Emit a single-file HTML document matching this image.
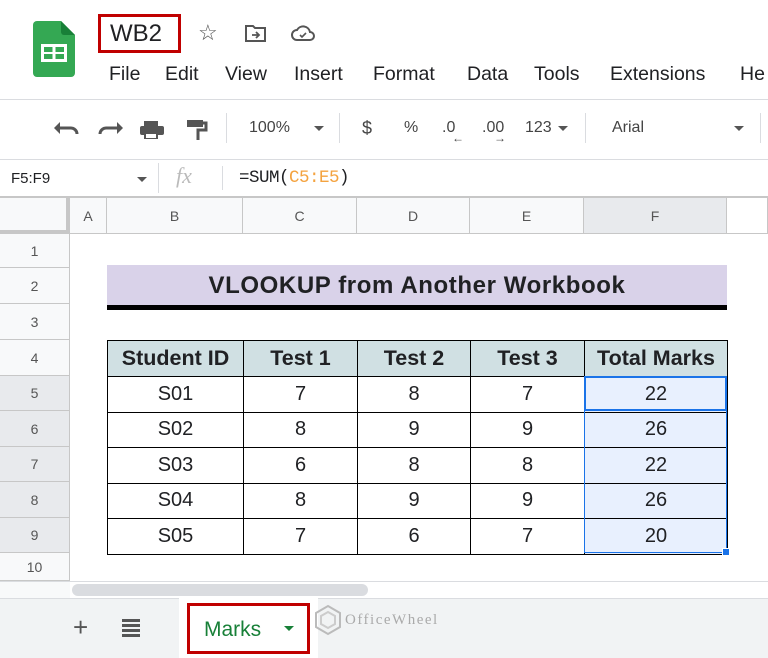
<!DOCTYPE html>
<html><head><style>
*{margin:0;padding:0;box-sizing:border-box}
body{width:768px;height:658px;position:relative;overflow:hidden;background:#fff;font-family:"Liberation Sans",Arial,sans-serif;color:#202124}
.a{position:absolute}
.menu span{position:absolute;top:63px;font-size:19.5px;color:#202124}
.tb{position:absolute;font-size:16px;color:#444;top:119px}
.ch{position:absolute;top:198px;height:36px;border-right:1px solid #c7c7c7;border-bottom:1px solid #c7c7c7;background:#f8f9fa;text-align:center;line-height:36px;font-size:14px;color:#555}
.rh{position:absolute;left:0;width:70px;border-right:1px solid #c7c7c7;border-bottom:1px solid #c7c7c7;background:#f8f9fa;text-align:center;font-size:14px;color:#555}
table{position:absolute;left:107px;top:340px;border-collapse:collapse}
td{border:1.5px solid #000;text-align:center;font-size:20px;padding:0;height:35.5px}
th{border:1.5px solid #000;background:#d0e0e3;font-size:21.5px;font-weight:bold;height:36px;padding:0}
td.f{background:#e8f0fe;border-color:#000}
</style></head><body>
<svg class="a" style="left:33px;top:21px" width="42" height="57" viewBox="0 0 42 57"><path d="M4 0H28L42 14V52a4 4 0 0 1-4 4H4a4 4 0 0 1-4-4V4a4 4 0 0 1 4-4z" fill="#34a853"/><path d="M28 0L42 14H31a3 3 0 0 1-3-3z" fill="#188038"/><rect x="8" y="23" width="26" height="18" fill="#fff"/><rect x="11" y="26" width="8.5" height="5" fill="#34a853"/><rect x="22.5" y="26" width="8.5" height="5" fill="#34a853"/><rect x="11" y="33" width="8.5" height="5" fill="#34a853"/><rect x="22.5" y="33" width="8.5" height="5" fill="#34a853"/></svg>
<div class="a" style="left:98px;top:14px;width:83px;height:39px;border:3px solid #c00000;font-size:24px;line-height:33px;padding-left:9px">WB2</div>
<div class="a" style="left:198px;top:20px;font-size:22px;color:#555">☆</div>
<svg class="a" style="left:244px;top:24px" width="24" height="20" viewBox="0 0 24 20"><path d="M2 2h7l2 2h10v13H2z" fill="none" stroke="#555" stroke-width="2"/><path d="M8 11h7M12 8l3 3-3 3" fill="none" stroke="#555" stroke-width="1.8"/></svg>
<svg class="a" style="left:290px;top:24px" width="26" height="18" viewBox="0 0 26 18"><path d="M7 16a5 5 0 0 1 0-10 7 7 0 0 1 13 2 4 4 0 0 1 0 8z" fill="none" stroke="#555" stroke-width="2"/><path d="M10 11l2 2 4-4" fill="none" stroke="#555" stroke-width="1.6"/></svg>
<div class="menu"><span style="left:109px">File</span><span style="left:165px">Edit</span><span style="left:225px">View</span><span style="left:294px">Insert</span><span style="left:373px">Format</span><span style="left:467px">Data</span><span style="left:534px">Tools</span><span style="left:610px">Extensions</span><span style="left:740px">He</span></div>
<div class="a" style="left:0;top:99px;width:768px;height:1px;background:#dadce0"></div>
<svg class="a" style="left:53px;top:119px" width="160" height="22" viewBox="0 0 160 22"><path d="M4 9h14a6 6 0 0 1 6 6" fill="none" stroke="#555" stroke-width="3"/><path d="M1 9l6-6v12z" fill="#555"/><path d="M67 9H53a6 6 0 0 0-6 6" fill="none" stroke="#555" stroke-width="3"/><path d="M70 9l-6-6v12z" fill="#555"/><rect x="91" y="2" width="14" height="5" fill="#555"/><rect x="87" y="7" width="24" height="9" rx="2" fill="#555"/><rect x="91" y="13" width="14" height="7" fill="#555"/><rect x="93" y="15" width="10" height="4" fill="#fff"/><rect x="134" y="1" width="16" height="7" fill="#555"/><path d="M150 4h3v7h-8v10" fill="none" stroke="#555" stroke-width="3"/></svg>
<div class="a" style="left:226px;top:113px;width:1px;height:30px;background:#dadce0"></div>
<div class="tb" style="left:249px">100%</div>
<div class="a" style="left:314px;top:126px;border:5px solid transparent;border-top-color:#555"></div>
<div class="a" style="left:339px;top:113px;width:1px;height:30px;background:#dadce0"></div>
<div class="tb" style="left:362px;top:118px;font-size:18px">$</div>
<div class="tb" style="left:404px">%</div>
<div class="tb" style="left:442px">.0</div><div class="tb" style="left:452px;top:131px;font-size:12px">←</div>
<div class="tb" style="left:482px">.00</div><div class="tb" style="left:494px;top:131px;font-size:12px">→</div>
<div class="tb" style="left:525px">123</div>
<div class="a" style="left:558px;top:126px;border:5px solid transparent;border-top-color:#555"></div>
<div class="a" style="left:585px;top:113px;width:1px;height:30px;background:#dadce0"></div>
<div class="tb" style="left:612px">Arial</div>
<div class="a" style="left:734px;top:126px;border:5px solid transparent;border-top-color:#555"></div>
<div class="a" style="left:760px;top:113px;width:1px;height:30px;background:#dadce0"></div>
<div class="a" style="left:0;top:159px;width:768px;height:1px;background:#dadce0"></div>
<div class="a" style="left:11px;top:170px;font-size:15px">F5:F9</div>
<div class="a" style="left:137px;top:177px;border:5px solid transparent;border-top-color:#555"></div>
<div class="a" style="left:158px;top:163px;width:1px;height:30px;background:#dadce0"></div>
<div class="a" style="left:176px;top:163px;font-size:22px;font-style:italic;color:#bbb;font-family:'Liberation Serif',serif">fx</div>
<div class="a" style="left:222px;top:166px;width:1px;height:24px;background:#dadce0"></div>
<div class="a" style="left:239px;top:168px;font-size:17.5px;font-family:'Liberation Mono',monospace;letter-spacing:-0.5px">=SUM(<span style="color:#f4a340">C5:E5</span>)</div>
<div class="a" style="left:0;top:196px;width:768px;height:2px;background:#c7c7c7"></div>
<div class="ch" style="left:0;width:70px;border-right:4px solid #c7c7c7;border-bottom:4px solid #c7c7c7"></div>
<div class="ch" style="left:70px;width:37px">A</div>
<div class="ch" style="left:107px;width:136px">B</div>
<div class="ch" style="left:243px;width:114px">C</div>
<div class="ch" style="left:357px;width:113px">D</div>
<div class="ch" style="left:470px;width:114px">E</div>
<div class="ch" style="left:584px;width:143px;background:#e8eaed">F</div>
<div class="ch" style="left:727px;width:41px;background:#fff"></div>
<div class="rh" style="top:234px;height:34px;line-height:34px">1</div>
<div class="rh" style="top:268px;height:36px;line-height:36px">2</div>
<div class="rh" style="top:304px;height:36px;line-height:36px">3</div>
<div class="rh" style="top:340px;height:36px;line-height:36px">4</div>
<div class="rh" style="top:376px;height:35px;line-height:35px;background:#e8eaed">5</div>
<div class="rh" style="top:411px;height:36px;line-height:36px;background:#e8eaed">6</div>
<div class="rh" style="top:447px;height:35px;line-height:35px;background:#e8eaed">7</div>
<div class="rh" style="top:482px;height:36px;line-height:36px;background:#e8eaed">8</div>
<div class="rh" style="top:518px;height:35px;line-height:35px;background:#e8eaed">9</div>
<div class="rh" style="top:553px;height:28px;line-height:28px">10</div>
<div class="a" style="left:107px;top:265px;width:620px;height:40px;background:#d9d2e9;text-align:center;font-weight:bold;font-size:24px;letter-spacing:0.6px;line-height:42px">VLOOKUP from Another Workbook</div>
<div class="a" style="left:107px;top:305px;width:620px;height:5px;background:#000"></div>
<table>
<tr><th style="width:136px">Student ID</th><th style="width:114px">Test 1</th><th style="width:113px">Test 2</th><th style="width:114px">Test 3</th><th style="width:143px">Total Marks</th></tr>
<tr><td>S01</td><td>7</td><td>8</td><td>7</td><td class="f">22</td></tr>
<tr><td>S02</td><td>8</td><td>9</td><td>9</td><td class="f">26</td></tr>
<tr><td>S03</td><td>6</td><td>8</td><td>8</td><td class="f">22</td></tr>
<tr><td>S04</td><td>8</td><td>9</td><td>9</td><td class="f">26</td></tr>
<tr><td>S05</td><td>7</td><td>6</td><td>7</td><td class="f">20</td></tr>
</table>
<div class="a" style="left:584px;top:376px;width:143px;height:177px;border:1px solid #1a73e8"></div>
<div class="a" style="left:584px;top:376px;width:143px;height:35px;border:2px solid #1a73e8"></div>
<div class="a" style="left:722px;top:548px;width:8px;height:8px;background:#1a73e8;border:1px solid #fff"></div>
<div class="a" style="left:0;top:581px;width:768px;height:1px;background:#dadce0"></div>
<div class="a" style="left:0;top:582px;width:70px;height:16px;background:#f8f9fa"></div>
<div class="a" style="left:72px;top:584px;width:296px;height:12px;border-radius:6px;background:#dadce0"></div>
<div class="a" style="left:0;top:598px;width:768px;height:60px;background:#f1f3f4;border-top:1px solid #dadce0"></div>
<div class="a" style="left:73px;top:612px;font-size:26px;color:#555">+</div>
<div class="a" style="left:122px;top:619px;width:18px;height:2.5px;background:#555;box-shadow:0 5px 0 #555,0 10px 0 #555,0 15px 0 #555"></div>
<div class="a" style="left:179px;top:598px;width:139px;height:60px;background:#fff"></div>
<div class="a" style="left:187px;top:603px;width:123px;height:51px;border:3px solid #c00000"></div>
<div class="a" style="left:204px;top:618px;font-size:21px;color:#188038">Marks</div>
<div class="a" style="left:284px;top:626px;border:5px solid transparent;border-top-color:#188038"></div>
<svg class="a" style="left:314px;top:604px" width="28" height="32" viewBox="0 0 28 32"><path d="M14 2L26 9v14l-12 7L2 23V9z" fill="none" stroke="#bbb" stroke-width="2"/><path d="M14 8l7 4v8l-7 4-7-4v-8z" fill="none" stroke="#ccc" stroke-width="2"/></svg>
<div class="a" style="left:345px;top:612px;font-size:15px;color:#aaa;font-family:'Liberation Serif',serif;letter-spacing:1.5px">OfficeWheel</div>
</body></html>
